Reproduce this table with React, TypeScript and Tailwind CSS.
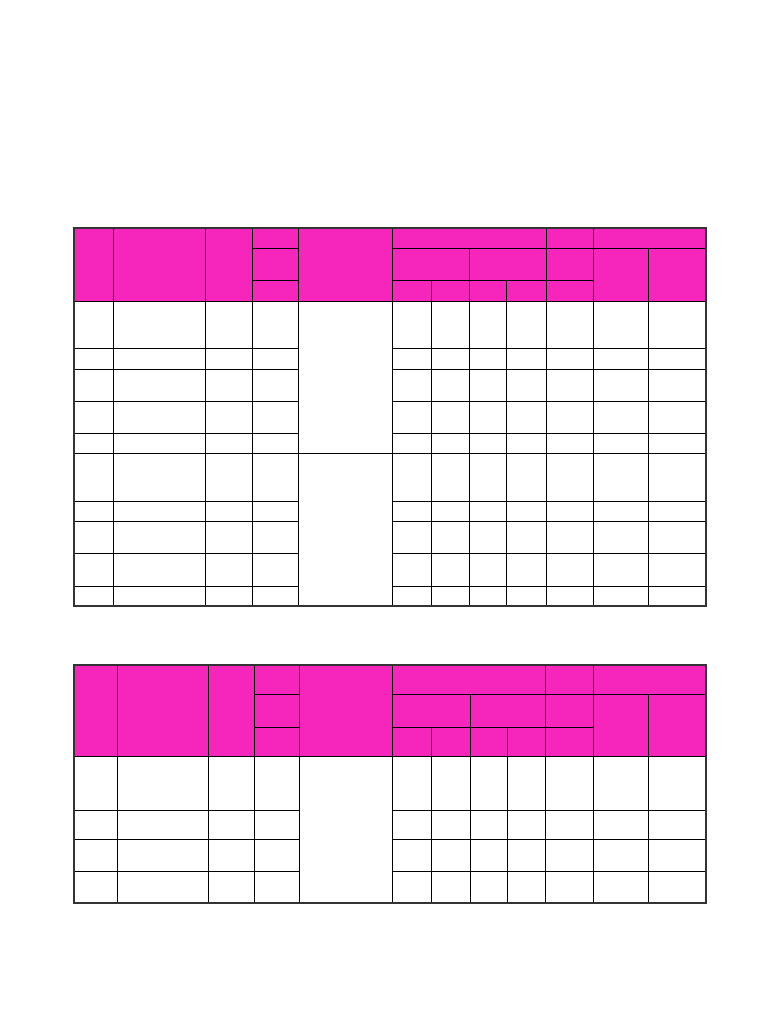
const cell = 'border border-black p-0';
const head = 'border border-black p-0 bg-[#f626bc]';

function Header({ rows }: { rows: [string, string, string] }) {
  return (
    <thead>
      <tr className={rows[0]}>
        <td rowSpan={3} className={head} />
        <td rowSpan={3} className={head} />
        <td rowSpan={3} className={head} />
        <td className={head} />
        <td rowSpan={3} className={head} />
        <td colSpan={4} className={head} />
        <td className={head} />
        <td colSpan={2} className={head} />
      </tr>
      <tr className={rows[1]}>
        <td className={head} />
        <td colSpan={2} className={head} />
        <td colSpan={2} className={head} />
        <td className={head} />
        <td rowSpan={2} className={head} />
        <td rowSpan={2} className={head} />
      </tr>
      <tr className={rows[2]}>
        <td className={head} />
        <td className={head} />
        <td className={head} />
        <td className={head} />
        <td className={head} />
        <td className={head} />
      </tr>
    </thead>
  );
}

function Body({ heights, spans }: { heights: string[]; spans: number[] }) {
  // spans: row indexes where the merged 5th column starts
  return (
    <tbody>
      {heights.map((h, i) => {
        const start = spans.indexOf(i);
        const span = start >= 0 ? (spans[start + 1] ?? heights.length) - i : 0;
        return (
          <tr key={i} className={h}>
            <td className={cell} />
            <td className={cell} />
            <td className={cell} />
            <td className={cell} />
            {start >= 0 && <td rowSpan={span} className={cell} />}
            <td className={cell} />
            <td className={cell} />
            <td className={cell} />
            <td className={cell} />
            <td className={cell} />
            <td className={cell} />
            <td className={cell} />
          </tr>
        );
      })}
    </tbody>
  );
}

export default function App() {
  return (
    <div className="min-h-[1024px] bg-white pt-[227px] pl-[73px] font-['Liberation_Sans',sans-serif]">
      <table className="w-[632px] table-fixed border-collapse border-2 border-[#333]">
        <colgroup>
          <col className="w-[39px]" />
          <col className="w-[92px]" />
          <col className="w-[47px]" />
          <col className="w-[46px]" />
          <col className="w-[94px]" />
          <col className="w-[39px]" />
          <col className="w-[38px]" />
          <col className="w-[37px]" />
          <col className="w-[40px]" />
          <col className="w-[47px]" />
          <col className="w-[55px]" />
          <col className="w-[58px]" />
        </colgroup>
        <Header rows={['h-[20px]', 'h-[32px]', 'h-[21px]']} />
        <Body
          heights={[
            'h-[47px]',
            'h-[21px]',
            'h-[32px]',
            'h-[32px]',
            'h-[20px]',
            'h-[48px]',
            'h-[20px]',
            'h-[32px]',
            'h-[33px]',
            'h-[20px]',
          ]}
          spans={[0, 5]}
        />
      </table>

      <table className="mt-[57px] w-[632px] table-fixed border-collapse border-2 border-[#333]">
        <colgroup>
          <col className="w-[43px]" />
          <col className="w-[91px]" />
          <col className="w-[46px]" />
          <col className="w-[45px]" />
          <col className="w-[93px]" />
          <col className="w-[39px]" />
          <col className="w-[39px]" />
          <col className="w-[37px]" />
          <col className="w-[38px]" />
          <col className="w-[48px]" />
          <col className="w-[55px]" />
          <col className="w-[58px]" />
        </colgroup>
        <Header rows={['h-[29px]', 'h-[33px]', 'h-[29px]']} />
        <Body heights={['h-[54px]', 'h-[29px]', 'h-[32px]', 'h-[32px]']} spans={[0]} />
      </table>
    </div>
  );
}
